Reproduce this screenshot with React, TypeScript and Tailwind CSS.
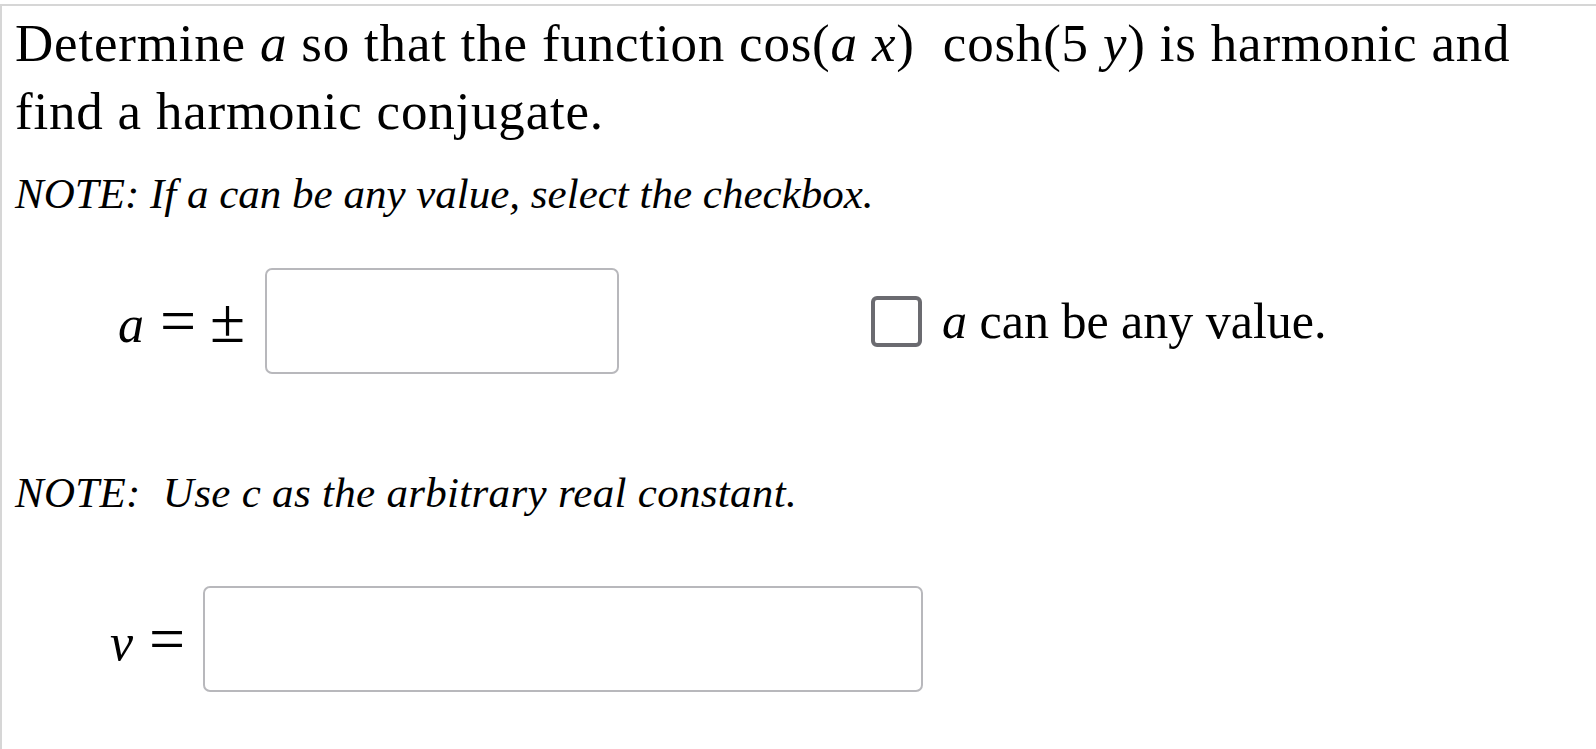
import React from "react"

const serif = { fontFamily: '"Liberation Serif", "DejaVu Serif", serif' }

const App: React.FC = () => {
  return (
    <div className="min-h-screen bg-white pt-1 text-black" style={serif}>
      <div className="min-h-[745px] border-t-2 border-l-2 border-[#d6d6d6] pl-[13px] pt-[3px]">
        <p className="text-[53px] leading-[68px] tracking-[0.8px]">
          Determine <i>a</i> so that the function cos(<i>a</i> <i>x</i>)&nbsp; cosh(5 <i>y</i>) is harmonic and
          <br />
          find a harmonic conjugate.
        </p>

        <p className="mt-[24px] text-[43px] italic leading-[50px]">
          NOTE: If a can be any value, select the checkbox.
        </p>

        <div className="mt-[49px] flex items-center">
          <div className="flex w-[250px] items-baseline pl-[103px] text-[52px] leading-none">
            <i>a</i>
            <span className="ml-[16px] text-[64px] leading-none">=</span>
            <span className="ml-[14px] text-[64px] leading-none">±</span>
          </div>
          <div className="h-[106px] w-[354px] rounded-[7px] border-2 border-[#b8b8bc] bg-white" />
          <div className="ml-[252px] h-[51px] w-[51px] rounded-[6px] border-[4px] border-[#6b6b70]" />
          <span className="ml-[20px] text-[50px] leading-none">
            <i>a</i> can be any value.
          </span>
        </div>

        <p className="mt-[94px] text-[43px] italic leading-[50px] tracking-[0.3px]">
          NOTE:&nbsp; Use c as the arbitrary real constant.
        </p>

        <div className="mt-[68px] flex items-center">
          <div className="flex w-[188px] items-baseline pl-[95px] text-[52px] leading-none">
            <i>v</i>
            <span className="ml-[16px] text-[64px] leading-none">=</span>
          </div>
          <div className="h-[106px] w-[720px] rounded-[7px] border-2 border-[#b8b8bc] bg-white" />
        </div>
      </div>
    </div>
  )
}

export default App
